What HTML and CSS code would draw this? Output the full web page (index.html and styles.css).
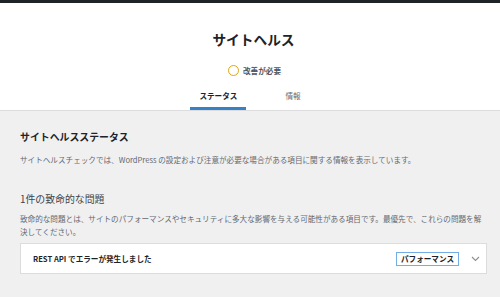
FILE: index.html
```html
<!DOCTYPE html>
<html lang="ja">
<head>
    <meta charset="UTF-8">
    <meta name="viewport" content="width=device-width, initial-scale=1.0">
    <title>サイトヘルス</title>
    <link rel="stylesheet" href="styles.css">
</head>
<body>
    <div class="adminbar"></div>

    <div class="health-header">
        <h1>サイトヘルス</h1>
        <div class="health-status">
            <span class="status-ring"></span>
            <span class="status-label">改善が必要</span>
        </div>
        <nav class="health-tabs">
            <a class="tab active">ステータス</a>
            <a class="tab">情報</a>
        </nav>
    </div>

    <div class="health-body">
        <h2>サイトヘルスステータス</h2>
        <p class="desc">サイトヘルスチェックでは、WordPress の設定および注意が必要な場合がある項目に関する情報を表示しています。</p>

        <h3>1件の致命的な問題</h3>
        <p class="desc">致命的な問題とは、サイトのパフォーマンスやセキュリティに多大な影響を与える可能性がある項目です。最優先で、これらの問題を解決してください。</p>

        <div class="issue">
            <span class="issue-title">REST API でエラーが発生しました</span>
            <span class="badge">パフォーマンス</span>
            <svg class="chevron" width="9" height="6" viewBox="0 0 9 6">
                <path d="M1 1l3.5 3.5L8 1" fill="none" stroke="#8c8f94" stroke-width="1.1"/>
            </svg>
        </div>
    </div>
</body>
</html>
```

FILE: styles.css
```css
* {
    margin: 0;
    padding: 0;
    box-sizing: border-box;
}

body {
    font-family: "Noto Sans CJK JP", "Noto Sans", sans-serif;
    background: #f0f0f1;
    color: #1d2327;
}

.adminbar {
    height: 3px;
    background: #1d2327;
}

.health-header {
    background: white;
    text-align: center;
    padding-top: 26px;
    border-bottom: 1px solid #dcdcde;
}

h1 {
    padding-left: 7px;
    font-size: 13.7px;
    line-height: 20px;
    font-weight: 700;
    color: #1d2327;
}

.health-status {
    display: flex;
    justify-content: center;
    align-items: center;
    gap: 4px;
    margin-top: 15px;
    padding-left: 9px;
    height: 12px;
}

.status-ring {
    width: 11px;
    height: 11px;
    border: 1.6px solid #dba617;
    border-radius: 50%;
}

.status-label {
    font-size: 7.6px;
    font-weight: 700;
    color: #50575e;
}

.health-tabs {
    display: flex;
    justify-content: center;
    gap: 30px;
}

.tab {
    display: block;
    padding: 14px 9px 5px;
    font-size: 7.6px;
    line-height: 12px;
    color: #646970;
    border-bottom: 3px solid transparent;
}

.tab.active {
    font-weight: 700;
    color: #1d2327;
    border-bottom-color: #3582c4;
}

.health-body {
    padding: 19px 13px 20px 20px;
}

h2 {
    font-size: 9.9px;
    line-height: 14px;
    font-weight: 700;
    color: #1d2327;
}

.desc {
    font-size: 7.6px;
    line-height: 13px;
    color: #646970;
}

h2 + .desc {
    margin-top: 9px;
}

h3 {
    margin-top: 26px;
    font-size: 9.9px;
    line-height: 14px;
    font-weight: 400;
    color: #3c434a;
}

h3 + .desc {
    margin-top: 6px;
}

.issue {
    display: flex;
    align-items: center;
    height: 31px;
    margin-top: 5px;
    padding: 0 6px 0 12px;
    background: white;
    border: 1px solid #dcdcde;
}

.issue-title {
    flex: 1;
    font-size: 7.6px;
    font-weight: 700;
    color: #1d2327;
}

.badge {
    font-size: 7.6px;
    line-height: 12px;
    font-weight: 700;
    color: #1d2327;
    padding: 0 4px;
    border: 1px solid #72aee6;
}

.chevron {
    margin-left: 12px;
}
```
